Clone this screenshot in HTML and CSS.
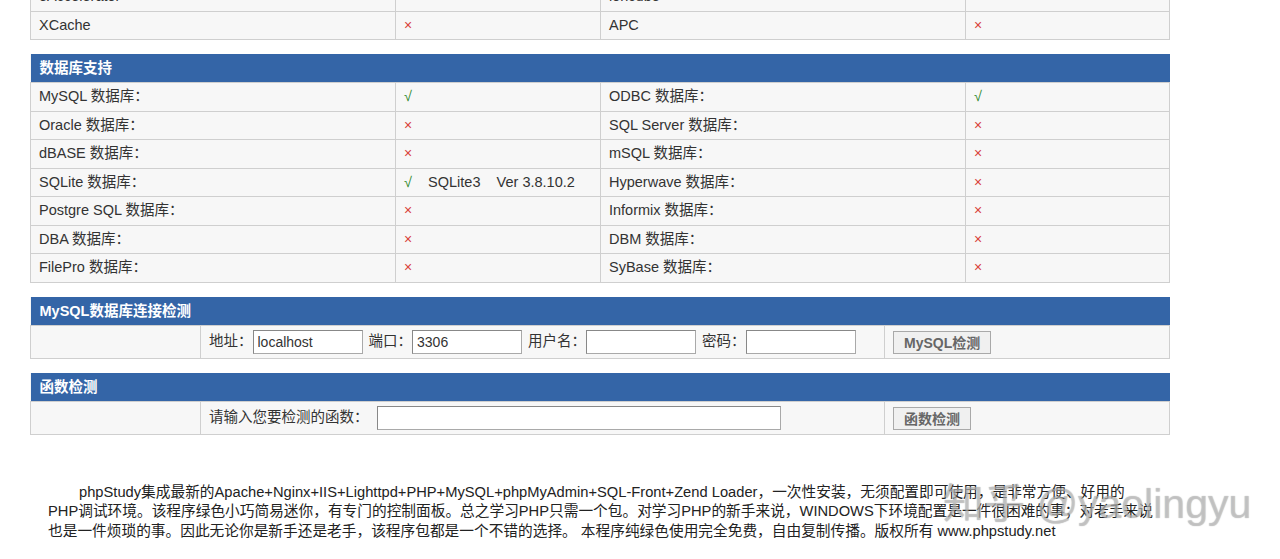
FILE: index.html
```html
<!DOCTYPE html>
<html lang="zh-CN">
<head>
    <meta charset="UTF-8">
    <title>phpStudy 探针</title>
    <link rel="stylesheet" href="styles.css">
</head>
<body>
    <table class="box first">
        <colgroup><col class="w1"><col class="w2"><col class="w1"><col></colgroup>
        <tr>
            <td>eAccelerator</td><td><span class="no">×</span></td>
            <td>ioncube</td><td><span class="no">×</span></td>
        </tr>
        <tr>
            <td>XCache</td><td><span class="no">×</span></td>
            <td>APC</td><td><span class="no">×</span></td>
        </tr>
    </table>

    <table class="box">
        <colgroup><col class="w1"><col class="w2"><col class="w1"><col></colgroup>
        <tr><th colspan="4">数据库支持</th></tr>
        <tr>
            <td>MySQL 数据库：</td><td><span class="yes">√</span></td>
            <td>ODBC 数据库：</td><td><span class="yes">√</span></td>
        </tr>
        <tr>
            <td>Oracle 数据库：</td><td><span class="no">×</span></td>
            <td>SQL Server 数据库：</td><td><span class="no">×</span></td>
        </tr>
        <tr>
            <td>dBASE 数据库：</td><td><span class="no">×</span></td>
            <td>mSQL 数据库：</td><td><span class="no">×</span></td>
        </tr>
        <tr>
            <td>SQLite 数据库：</td><td><span class="yes">√</span>&nbsp;&nbsp;&nbsp; SQLite3 &nbsp;&nbsp; Ver 3.8.10.2</td>
            <td>Hyperwave 数据库：</td><td><span class="no">×</span></td>
        </tr>
        <tr>
            <td>Postgre SQL 数据库：</td><td><span class="no">×</span></td>
            <td>Informix 数据库：</td><td><span class="no">×</span></td>
        </tr>
        <tr>
            <td>DBA 数据库：</td><td><span class="no">×</span></td>
            <td>DBM 数据库：</td><td><span class="no">×</span></td>
        </tr>
        <tr>
            <td>FilePro 数据库：</td><td><span class="no">×</span></td>
            <td>SyBase 数据库：</td><td><span class="no">×</span></td>
        </tr>
    </table>

    <table class="box">
        <colgroup><col class="c1"><col class="c2"><col></colgroup>
        <tr><th colspan="3">MySQL数据库连接检测</th></tr>
        <tr class="form-row">
            <td></td>
            <td>地址：<input type="text" class="inp" value="localhost">
                端口：<input type="text" class="inp" value="3306">
                用户名：<input type="text" class="inp">
                密码：<input type="password" class="inp"></td>
            <td><button class="btn">MySQL检测</button></td>
        </tr>
    </table>

    <table class="box">
        <colgroup><col class="c1"><col class="c2"><col></colgroup>
        <tr><th colspan="3">函数检测</th></tr>
        <tr class="form-row">
            <td></td>
            <td>请输入您要检测的函数：<input type="text" class="inp long"></td>
            <td><button class="btn">函数检测</button></td>
        </tr>
    </table>

    <div class="footer">
        <p>phpStudy集成最新的Apache+Nginx+IIS+Lighttpd+PHP+MySQL+phpMyAdmin+SQL-Front+Zend Loader，一次性安装，无须配置即可使用，是非常方便、好用的<br>PHP调试环境。该程序绿色小巧简易迷你，有专门的控制面板。总之学习PHP只需一个包。对学习PHP的新手来说，WINDOWS下环境配置是一件很困难的事；对老手来说<br>也是一件烦琐的事。因此无论你是新手还是老手，该程序包都是一个不错的选择。 本程序纯绿色使用完全免费，自由复制传播。版权所有 www.phpstudy.net</p>
        <span class="watermark">知乎 @yaolingyu</span>
    </div>
</body>
</html>
```

FILE: styles.css
```css
body {
    margin: 0;
    background: #fff;
    font-family: "Liberation Sans", "Noto Sans CJK SC", sans-serif;
    font-size: 14.5px;
    color: #333;
}
.box {
    width: 1140px;
    margin: 0 0 14px 30px;
    border-collapse: collapse;
    background: #f7f7f7;
    table-layout: fixed;
}
.box.first {
    margin-top: -18px;
}
.box .w1 {
    width: 365px;
}
.box .w2 {
    width: 205px;
}
.box .c1 {
    width: 170px;
}
.box .c2 {
    width: 684px;
}
.box th {
    background: #3465a7;
    color: #fff;
    font-weight: bold;
    text-align: left;
    padding: 0 9px;
    height: 28px;
    line-height: 28px;
    border: 0;
}
.box td {
    border: 1px solid #cfcfcf;
    padding: 0 8px;
    height: 27.5px;
    line-height: 27px;
    white-space: nowrap;
}
.yes {
    color: #2f8a2f;
}
.no {
    color: #d9413b;
    font-size: 14px;
}
.box .form-row td {
    height: 26px;
    line-height: 24px;
    padding: 3px 8px;
}
.inp {
    width: 110px;
    height: 24px;
    box-sizing: border-box;
    border: 1px solid #a9a9a9;
    border-top-color: #888;
    border-left-color: #888;
    padding: 0 4px;
    font-family: inherit;
    font-size: 14px;
    color: #333;
    vertical-align: middle;
    margin-right: 2px;
}
.inp.long {
    width: 404px;
    margin-left: 8px;
}
.btn {
    height: 23px;
    padding: 0 10px;
    background: #f0f0f0;
    border: 1px solid #a9a9a9;
    color: #666;
    font-family: inherit;
    font-size: 14px;
    font-weight: bold;
    vertical-align: middle;
}
.footer {
    position: relative;
    margin: 48px 0 0 48px;
    width: 1100px;
}
.footer p {
    margin: 0;
    font-size: 14.7px;
    text-indent: 31px;
    line-height: 19.5px;
    white-space: nowrap;
    color: #222;
}
.watermark {
    position: absolute;
    left: 895px;
    top: -13px;
    font-size: 41px;
    color: rgba(210, 210, 210, 0.6);
    text-shadow: 0 0 1px rgba(0, 0, 0, 0.35);
    white-space: nowrap;
}
```
